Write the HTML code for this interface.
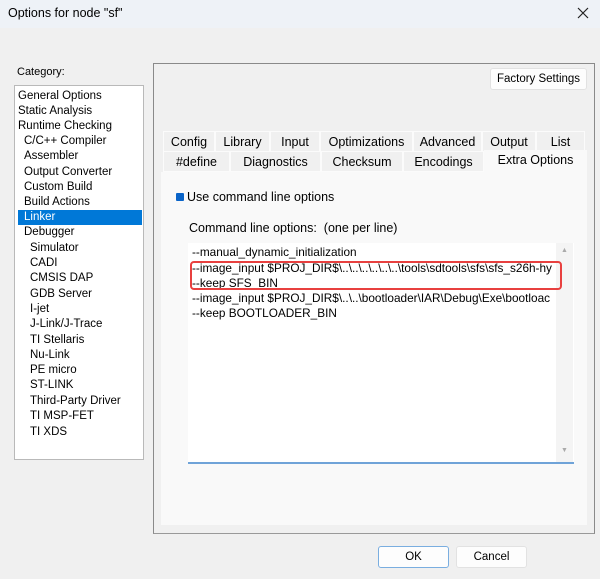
<!DOCTYPE html>
<html><head><style>
*{margin:0;padding:0;box-sizing:border-box}
body{width:600px;height:579px;background:#f0f0f0;font-family:"Liberation Sans",sans-serif;font-size:12px;color:#000;position:relative;overflow:hidden}
.a{position:absolute;white-space:nowrap}
.tab{position:absolute;height:21px;background:#f0f0f0;border:1px solid #fbfbfb;text-align:center;line-height:20px;font-size:12.5px}
.li{position:absolute;left:3px;width:124px;height:15px;line-height:15px;font-size:11.5px}
.ln{position:absolute;left:4px;font-size:11.8px;line-height:15px}
.btn{position:absolute;background:#fdfdfd;border:1px solid #d0d0d0;border-radius:3px;text-align:center;line-height:20px;font-size:11.5px}
</style></head><body>
<div class="a" style="left:0;top:0;width:600px;height:28px;background:#eef2f7"></div>
<div class="a" style="left:8px;top:6px;font-size:12.5px">Options for node "sf"</div>
<svg class="a" style="left:577px;top:7px" width="12" height="12"><path d="M1 1L11 11M11 1L1 11" stroke="#222" stroke-width="1.2"/></svg>
<div class="a" style="left:17px;top:66px;font-size:11px">Category:</div>
<div class="a" style="left:14px;top:85px;width:130px;height:375px;background:#fff;border:1px solid #b9b9b9">
<div class="li" style="top:3px">General Options</div>
<div class="li" style="top:18px">Static Analysis</div>
<div class="li" style="top:33px">Runtime Checking</div>
<div class="li" style="top:48px;padding-left:6px">C/C++ Compiler</div>
<div class="li" style="top:63px;padding-left:6px">Assembler</div>
<div class="li" style="top:79px;padding-left:6px">Output Converter</div>
<div class="li" style="top:94px;padding-left:6px">Custom Build</div>
<div class="li" style="top:109px;padding-left:6px">Build Actions</div>
<div class="li" style="top:124px;padding-left:6px;background:#0078d7;color:#fff">Linker</div>
<div class="li" style="top:139px;padding-left:6px">Debugger</div>
<div class="li" style="top:155px;padding-left:12px">Simulator</div>
<div class="li" style="top:170px;padding-left:12px">CADI</div>
<div class="li" style="top:185px;padding-left:12px">CMSIS DAP</div>
<div class="li" style="top:201px;padding-left:12px">GDB Server</div>
<div class="li" style="top:216px;padding-left:12px">I-jet</div>
<div class="li" style="top:231px;padding-left:12px">J-Link/J-Trace</div>
<div class="li" style="top:247px;padding-left:12px">TI Stellaris</div>
<div class="li" style="top:262px;padding-left:12px">Nu-Link</div>
<div class="li" style="top:277px;padding-left:12px">PE micro</div>
<div class="li" style="top:292px;padding-left:12px">ST-LINK</div>
<div class="li" style="top:308px;padding-left:12px">Third-Party Driver</div>
<div class="li" style="top:323px;padding-left:12px">TI MSP-FET</div>
<div class="li" style="top:339px;padding-left:12px">TI XDS</div>
</div>
<div class="a" style="left:153px;top:63px;width:442px;height:471px;border:1px solid #8a8a8a;border-bottom-color:#999"></div>
<div class="btn" style="left:490px;top:68px;width:97px;height:22px;border-color:#e2e2e2">Factory Settings</div>
<div class="tab" style="left:163px;top:131px;width:52px">Config</div>
<div class="tab" style="left:215px;top:131px;width:55px">Library</div>
<div class="tab" style="left:270px;top:131px;width:50px">Input</div>
<div class="tab" style="left:320px;top:131px;width:93px">Optimizations</div>
<div class="tab" style="left:413px;top:131px;width:69px">Advanced</div>
<div class="tab" style="left:482px;top:131px;width:54px">Output</div>
<div class="tab" style="left:536px;top:131px;width:49px">List</div>
<div class="tab" style="left:163px;top:151px;width:67px">#define</div>
<div class="tab" style="left:230px;top:151px;width:91px">Diagnostics</div>
<div class="tab" style="left:321px;top:151px;width:82px">Checksum</div>
<div class="tab" style="left:403px;top:151px;width:81px">Encodings</div>
<div class="a" style="left:161px;top:172px;width:426px;height:353px;background:#f9f9f9"></div>
<div class="tab" style="left:484px;top:150px;width:103px;height:23px;background:#f9f9f9;border:none;line-height:20px">Extra Options</div>
<div class="a" style="left:176px;top:193px;width:8px;height:8px;background:#0a64c8;border-radius:1px"></div>
<div class="a" style="left:187px;top:190px;font-size:12.5px">Use command line options</div>
<div class="a" style="left:189px;top:221px;font-size:12.5px">Command line options:&nbsp; (one per line)</div>
<div class="a" style="left:188px;top:243px;width:386px;height:221px;background:#fff;border-bottom:2px solid #6fa3d8;overflow:hidden">
<div class="a" style="left:368px;top:0;width:17px;height:219px;background:#f4f4f4"></div>
<div class="a" style="left:373px;top:4px;color:#aaa;font-size:7px">▲</div>
<div class="a" style="left:373px;top:204px;color:#aaa;font-size:7px">▼</div>
<div class="ln" style="top:2px">--manual_dynamic_initialization</div>
<div class="ln" style="top:18px">--image_input $PROJ_DIR$\..\..\..\..\..\..\tools\sdtools\sfs\sfs_s26h-hy</div>
<div class="ln" style="top:33px">--keep SFS_BIN</div>
<div class="ln" style="top:48px">--image_input $PROJ_DIR$\..\..\bootloader\IAR\Debug\Exe\bootloac</div>
<div class="ln" style="top:63px">--keep BOOTLOADER_BIN</div>
</div>
<div class="a" style="left:190px;top:261px;width:372px;height:29px;border:2.5px solid #e8403f;border-radius:4px"></div>
<div class="btn" style="left:378px;top:546px;width:71px;height:22px;border-color:#7aaee0">OK</div>
<div class="btn" style="left:456px;top:546px;width:71px;height:22px;border-color:#e2e2e2">Cancel</div>
</body></html>
